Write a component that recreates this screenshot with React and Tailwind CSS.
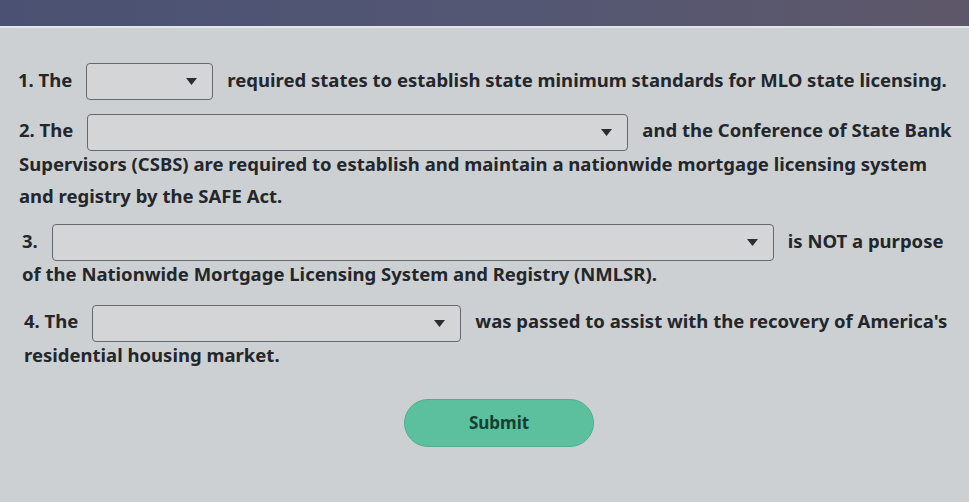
import React from "react";

function Select({ w }) {
  return (
    <span
      className="inline-flex items-center justify-end align-middle h-[37px] my-[-3px] rounded-[4px] border border-[#65686d] bg-[#d3d5d7] pr-[15px] mx-[14px]"
      style={{ width: w }}
    >
      <svg width="11" height="7" viewBox="0 0 11 7">
        <path d="M0 0 L11 0 L5.5 7 Z" fill="#2b2e33" />
      </svg>
    </span>
  );
}

export default function App() {
  return (
    <div
      className="w-[969px] h-[502px] overflow-hidden bg-[#cdd0d2] text-[#23262b] font-bold text-[18.5px]"
      style={{ fontFamily: '"Noto Sans", "Open Sans", sans-serif' }}
    >
      <div className="h-[28px] bg-gradient-to-r from-[#4a5172] via-[#535774] to-[#5e5769] border-b-[2px] border-[#e3e5e6]" />
      <div className="pl-[18px] pt-[36px] leading-[32px]">
        <p className="mb-[17px]">
          1. The<Select w={127} />required states to establish state minimum standards for MLO state licensing.
        </p>
        <p className="mb-[13px] pl-[1px]">
          2. The<Select w={541} />and the Conference of State Bank
          <br />
          Supervisors (CSBS) are required to establish and maintain a nationwide mortgage licensing system
          <br />
          and registry by the SAFE Act.
        </p>
        <p className="mb-[15px] pl-[4px]">
          3.<Select w={722} />is NOT a purpose
          <br />
          of the Nationwide Mortgage Licensing System and Registry (NMLSR).
        </p>
        <p className="pl-[6px]">
          4. The<Select w={369} />was passed to assist with the recovery of America's
          <br />
          residential housing market.
        </p>
        <div className="pl-[386px] pt-[28px]">
          <button className="w-[190px] h-[48px] rounded-full bg-[#5cc09f] border border-[#4fb08f] text-[#153f32] font-bold text-[17px]">
            Submit
          </button>
        </div>
      </div>
    </div>
  );
}
